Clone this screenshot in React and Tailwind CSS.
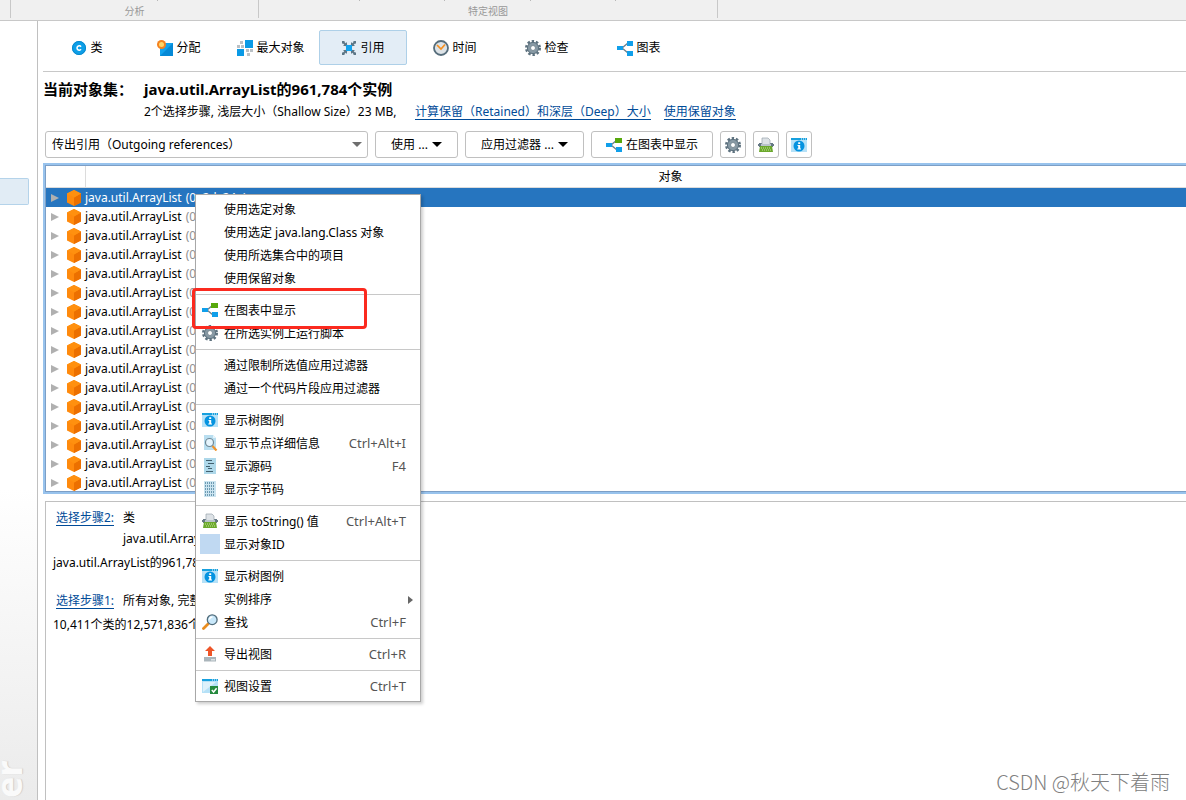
import clsx from 'clsx';

const tabs = [
  { label: '类', icon: 'class' },
  { label: '分配', icon: 'alloc' },
  { label: '最大对象', icon: 'biggest' },
  { label: '引用', icon: 'refs', active: true },
  { label: '时间', icon: 'clock' },
  { label: '检查', icon: 'gear' },
  { label: '图表', icon: 'graph' },
];

const menuGroups = [
  [
    { label: '使用选定对象' },
    { label: '使用选定 java.lang.Class 对象' },
    { label: '使用所选集合中的项目' },
    { label: '使用保留对象' },
  ],
  [
    { label: '在图表中显示', icon: 'showGraph' },
    { label: '在所选实例上运行脚本', icon: 'gear' },
  ],
  [{ label: '通过限制所选值应用过滤器' }, { label: '通过一个代码片段应用过滤器' }],
  [
    { label: '显示树图例', icon: 'info' },
    { label: '显示节点详细信息', icon: 'detail', keys: 'Ctrl+Alt+I' },
    { label: '显示源码', icon: 'source', keys: 'F4' },
    { label: '显示字节码', icon: 'bytecode' },
  ],
  [
    { label: '显示 toString() 值', icon: 'typewriter', keys: 'Ctrl+Alt+T' },
    { label: '显示对象ID', checked: true },
  ],
  [
    { label: '显示树图例', icon: 'info' },
    { label: '实例排序', submenu: true },
    { label: '查找', icon: 'search', keys: 'Ctrl+F' },
  ],
  [{ label: '导出视图', icon: 'export', keys: 'Ctrl+R' }],
  [{ label: '视图设置', icon: 'settings', keys: 'Ctrl+T' }],
];

const rows = ['(0x2dc24a)', ...Array(15).fill('(0x')];

const shapes = {
  class: (
    <>
      <circle cx="8" cy="8" r="7" fill="#0d9fe8" />
      <circle cx="8" cy="8" r="6.5" fill="none" stroke="#0787cc" />
      <path d="M10 6.7A2.2 2.2 0 1 0 10 9.3" fill="none" stroke="#fff" strokeWidth="1.5" />
    </>
  ),
  alloc: (
    <>
      <path d="M3 3h13v13H3z" fill="#12a3ee" />
      <path d="M3 16L16 3v13z" fill="#0589d6" />
      <circle cx="4.5" cy="4.5" r="4.5" fill="#f5821f" />
      <circle cx="4.5" cy="4.5" r="2.5" fill="#ffd76a" />
    </>
  ),
  biggest: (
    <>
      <path d="M8 0h8v8H8z M0 9h7v7H0z" fill="#0a9ae6" />
      <path d="M3 1h3v3H3z M0 5h3v3H0z M4 5h3v3H4z M9 9h3v3H9z M13 9h3v3h-3z M10 13h3v3h-3z" fill="#b9c0c5" />
    </>
  ),
  refs: (
    <>
      <path d="M2 2l4 4M14 2l-4 4M2 14l4-4M14 14l-4-4" stroke="#5d7686" strokeWidth="2" />
      <path d="M1 4V1h3z M12 1h3v3z M1 12v3h3z M12 15h3v-3z" fill="#5d7686" />
      <path d="M6 2v4H2z M10 2v4h4z M6 14v-4H2z M10 14v-4h4z" fill="#5d7686" />
      <path d="M5 5h6v6H5z" fill="#12a3ee" />
    </>
  ),
  clock: (
    <>
      <circle cx="8" cy="8" r="7" fill="#dde3e7" stroke="#566d7b" strokeWidth="1.8" />
      <path d="M4 5l4 4 4-4.500" fill="none" stroke="#f5901f" strokeWidth="1.7" />
    </>
  ),
  gear: (
    <>
      <circle cx="8" cy="8" r="6.5" fill="none" stroke="#5d717e" strokeWidth="3" strokeDasharray="2.3 1.784" />
      <circle cx="8" cy="8" r="4.200" fill="none" stroke="#8799a4" strokeWidth="3.400" />
      <circle cx="8" cy="8" r="5.600" fill="none" stroke="#5d717e" strokeWidth="1" />
      <circle cx="8" cy="8" r="2.500" fill="#fff" stroke="#5d717e" strokeWidth="0.8" />
    </>
  ),
  graph: (
    <>
      <path d="M5 8l6-5M5 8l6 5" fill="none" stroke="#6d8290" strokeWidth="1.5" />
      <path d="M0 6h6v4H0z M10 1h6v5h-6z M10 11h6v5h-6z" fill="#109fea" />
    </>
  ),
  showGraph: (
    <>
      <path d="M5 8l6-5M5 8l6 5" fill="none" stroke="#6d8290" strokeWidth="1.5" />
      <path d="M0 6h6v4H0z M10 10h6v5h-6z" fill="#109fea" />
      <path d="M9 1h7v5H9z" fill="#57a80c" />
    </>
  ),
  info: (
    <>
      <path d="M0 1h16v14H0z" fill="#b6e1f7" />
      <path d="M0 1h16v2H0z" fill="#17a0de" />
      <path d="M10 1.500h1v1h-1z M12 1.500h1v1h-1z M14 1.500h1v1h-1z" fill="#fff" />
      <circle cx="8" cy="9" r="5.500" fill="#0593e0" />
      <path d="M7.200 5.200h2v1.800h-2z M6.500 8h2.700v3.500h.8v1H6.300v-1h.9V9h-.7z" fill="#fff" />
    </>
  ),
  detail: (
    <>
      <path d="M2 0h9l3 3v12H2z" fill="#b9def0" />
      <path d="M11 0v3h3z" fill="#e6f4fa" />
      <path d="M10.5 11l4 4.5" stroke="#f0922a" strokeWidth="2.2" />
      <circle cx="7.5" cy="7.5" r="4" fill="#e6f5fd" stroke="#6e8795" strokeWidth="1.2" />
    </>
  ),
  source: (
    <>
      <path d="M2 0h12v16H2z" fill="#aed8ea" />
      <path d="M4 2.500h6M6 5.500h6M4 8.500h4M6 10.500h4M4 13.500h7" stroke="#42606f" />
    </>
  ),
  bytecode: (
    <>
      <path d="M2 0h12v16H2z" fill="#cbe4f0" />
      <path d="M3 2h10M3 5h10M3 8h10M3 11h10M3 14h10" stroke="#6d9ab2" strokeWidth="2" strokeDasharray="1 1" />
    </>
  ),
  typewriter: (
    <>
      <path d="M1 6h14v4H1z" fill="#667985" />
      <path d="M0 7h1v2H0z M15 7h1v2h-1z" fill="#667985" />
      <path d="M4 1h6l2 2v5H4z" fill="#dde2e6" stroke="#9aa4ac" strokeWidth="0.7" />
      <path d="M3 7h10v2H3z" fill="#b9c3ca" />
      <path d="M2 9h12l1 6H1z" fill="#6ba82c" />
      <path d="M3 11h10M4 13h9" stroke="#c4e39b" strokeDasharray="1 1" />
    </>
  ),
  search: (
    <>
      <path d="M1.500 14.500l4.500-4.500" stroke="#e98d20" strokeWidth="2.800" strokeLinecap="round" />
      <circle cx="10.200" cy="5.700" r="4.900" fill="#c9e8fa" stroke="#526d7c" strokeWidth="1.300" />
      <path d="M7.500 5.500a3 3 0 0 1 3-2.500" fill="none" stroke="#fff" strokeWidth="1.400" />
    </>
  ),
  export: (
    <>
      <path d="M8 0l5 5h-3v5H6V5H3z" fill="#ee5528" />
      <path d="M2 11h12v4.500H2z" fill="#aab5bb" />
      <path d="M9 13h4v1.500H9z" fill="#dce2e5" />
    </>
  ),
  settings: (
    <>
      <path d="M0 1h16v14H0z" fill="#b6e1f7" />
      <path d="M0 1h16v2H0z" fill="#17a0de" />
      <path d="M10 1.500h1v1h-1z M12 1.500h1v1h-1z M14 1.500h1v1h-1z" fill="#fff" />
      <path d="M1 14V4h13z" fill="#ddf1fb" />
      <path d="M8 8h8v8H8z" fill="#258a3e" />
      <path d="M9.800 12l1.800 2 3-3.800" fill="none" stroke="#fff" strokeWidth="1.500" />
    </>
  ),
  cube: (
    <>
      <path d="M8 0l7 3.500v9L8 16l-7-3.500v-9z" fill="#ff8a0d" />
      <path d="M15 3.500v9L8 16V7.500z" fill="#ec7000" />
      <path d="M8 0l7 3.500-7 4-7-4z" fill="#ff900f" />
    </>
  ),
};

const Icon = ({ name }) => (
  <svg viewBox="0 0 16 16" className="size-4 shrink-0" aria-hidden="true">
    {shapes[name]}
  </svg>
);

const Caret = ({ className }) => (
  <svg viewBox="0 0 10 5" className={clsx('h-[5px] w-[10px] shrink-0', className)} aria-hidden="true">
    <path d="M0 0h10L5 5z" fill="currentColor" />
  </svg>
);

const ToolButton = ({ className, children, ...props }) => (
  <button
    type="button"
    className={clsx('flex h-[27px] items-center justify-center rounded-[3px] border border-[#c0c0c0] bg-white', className)}
    {...props}
  >
    {children}
  </button>
);

// bottom ends of the separators between the ribbon buttons
const Ticks = ({ className }) => (
  <div className={clsx('absolute inset-x-0 top-0 flex', className)}>
    <i className="h-px w-px bg-[#b8b8b8]" />
    <i className="h-px w-px bg-[#b8b8b8]" />
    <i className="h-px w-px bg-[#b8b8b8]" />
    <i className="h-px w-px bg-[#b8b8b8]" />
  </div>
);

const Ribbon = () => (
  <header className="flex h-[21px] shrink-0 border-b border-[#c8c8c8] bg-[#f0f0f0] pl-[10px] text-[10px] leading-[20px] text-[#999]">
    <div className="relative h-[18px] w-[249px] border-x border-[#c8c8c8] pt-px text-center">
      分析
      <i className="absolute top-0 left-[146px] h-px w-px bg-[#b8b8b8]" />
    </div>
    <div className="relative h-[18px] w-[459px] border-r border-[#c8c8c8] pt-px text-center">
      特定视图
      <Ticks className="justify-between pr-[101px] pl-[100px]" />
    </div>
  </header>
);

const Sidebar = () => (
  <aside className="flex w-[38px] shrink-0 flex-col overflow-hidden border-r border-[#c0c0c0] bg-linear-to-b from-white from-60% to-[#ebebeb]">
    <div className="mt-[157px] h-[27px] w-[29px] rounded-r-[2px] border border-l-0 border-[#b4d3ea] bg-[#e1ecf5]" />
    <div className="mt-auto mb-[2px] h-[40px] w-[18px] rotate-180 text-[36px] leading-[18px] font-bold text-[#fafafa] [writing-mode:vertical-rl] text-shadow-[0px_1px_1px_#cccccc]">
      er
    </div>
  </aside>
);

const Tabs = () => (
  <nav className="flex h-[51px] items-center gap-1 border-b border-[#c8c8c8] pt-[2px]">
    {tabs.map((tab) => (
      <button
        key={tab.label}
        type="button"
        className={clsx(
          'flex h-[35px] w-[88px] shrink-0 items-center justify-center gap-[3px] rounded-[2px] border pt-px whitespace-nowrap',
          tab.active ? 'border-[#aed0e8] bg-[#e3edf6]' : 'border-transparent'
        )}
      >
        <Icon name={tab.icon} />
        {tab.label}
      </button>
    ))}
  </nav>
);

const CurrentSet = () => (
  <section className="flex pt-[7px]">
    <div className="w-[101px] shrink-0 text-[15px] leading-[20px] font-bold">当前对象集：</div>
    <div>
      <h1 className="text-[15px] leading-[20px] font-bold">java.util.ArrayList的961,784个实例</h1>
      <div className="flex pt-[3px] leading-[20px] whitespace-nowrap">
        <span className="w-[271px]">2个选择步骤, 浅层大小（Shallow Size）23 MB,</span>
        <a href="#retained" className="mr-[13px] h-[18px] border-b border-[#004b98] text-[#004b98]">
          计算保留（Retained）和深层（Deep）大小
        </a>
        <a href="#use" className="h-[18px] border-b border-[#004b98] text-[#004b98]">
          使用保留对象
        </a>
      </div>
    </div>
  </section>
);

const Toolbar = () => (
  <div className="flex gap-[7px] pt-[9px] pl-[2px]">
    <div className="relative w-[323px]">
      <select
        aria-label="引用类型"
        className="h-[27px] w-full appearance-none rounded-[3px] border border-[#c0c0c0] bg-white px-[6px]"
      >
        <option>传出引用（Outgoing references）</option>
      </select>
      <Caret className="pointer-events-none absolute top-[11px] right-[6px] text-[#6e6e6e]" />
    </div>
    <ToolButton className="w-[83px] gap-1">
      使用 ...
      <Caret />
    </ToolButton>
    <ToolButton className="w-[119px] gap-1">
      应用过滤器 ...
      <Caret />
    </ToolButton>
    <ToolButton className="w-[122px] gap-1">
      <Icon name="showGraph" />
      在图表中显示
    </ToolButton>
    <ToolButton className="w-[26px]" aria-label="脚本">
      <Icon name="gear" />
    </ToolButton>
    <ToolButton className="w-[26px]" aria-label="toString">
      <Icon name="typewriter" />
    </ToolButton>
    <ToolButton className="w-[26px]" aria-label="图例">
      <Icon name="info" />
    </ToolButton>
  </div>
);

const ObjectTable = () => (
  <div className="-mr-[72px] mt-[5px] h-[331px] overflow-hidden border-2 border-[#98c3ed]">
    <div className="h-full overflow-hidden border border-[#7d9fc6]">
      <table className="w-full table-fixed border-separate border-spacing-0">
        <thead>
          <tr className="h-[22px]">
            <th className="w-[40px] border-r border-b border-[#dcdcdc] p-0" />
            <th className="border-b border-[#dcdcdc] p-0 text-center leading-[20px] font-normal">对象</th>
          </tr>
        </thead>
        <tbody>
          {rows.map((address, i) => (
            <tr key={i} className={clsx('h-[19px]', i === 0 && 'bg-[#2675bf] text-white')}>
              <td colSpan={2} className="p-0">
                <div className="flex h-[19px] items-center pl-[5px] leading-[18px]">
                  <svg viewBox="0 0 8 10" className="mr-[7px] h-[10px] w-2 shrink-0" aria-hidden="true">
                    <path d="M0 1l8 4-8 4z" fill="#b0b0b0" />
                  </svg>
                  <Icon name="cube" />
                  <span className="pl-[3px]">java.util.ArrayList</span>
                  <span className={clsx('pl-1', i > 0 && 'text-[#909090]')}>{address}</span>
                </div>
              </td>
            </tr>
          ))}
        </tbody>
      </table>
    </div>
  </div>
);

const StepLink = ({ children }) => (
  <a href="#step" className="mr-[9px] h-[18px] border-b border-[#004b98] text-[#004b98]">
    {children}
  </a>
);

const Steps = () => (
  <section className="mt-[7px] ml-[2px] flex-1 border-t border-l border-[#c0c0c0] pt-[6px] pl-[7px] leading-[20px]">
    <div className="flex h-[21px] pl-[3px]">
      <StepLink>选择步骤2:</StepLink>
      类
    </div>
    <p className="h-[24px] pl-[70px]">java.util.ArrayList</p>
    <p className="h-[38px]">java.util.ArrayList的961,784个实例</p>
    <div className="flex h-[24px] pl-[3px]">
      <StepLink>选择步骤1:</StepLink>
      所有对象, 完整
    </div>
    <p>10,411个类的12,571,836个</p>
  </section>
);

const ContextMenu = () => (
  <ul
    role="menu"
    className="absolute top-[194px] left-[195px] w-[226px] border border-[#a8a8a8] bg-white py-[3px] shadow-[2px_2px_3px_rgba(0,0,0,0.2)]"
  >
    {menuGroups.map((group, g) => (
      <li key={g} className={clsx(g > 0 && 'mt-1 border-t border-[#c8c8c8] pt-1')}>
        {group.map((item) => (
          <button
            key={item.label}
            type="button"
            role="menuitem"
            className="flex h-[23px] w-full items-center pr-[14px] pl-[4px] whitespace-nowrap"
          >
            <span className={clsx('mt-px mr-1 flex size-5 items-center justify-center self-start', item.checked && 'bg-[#c0d9f2]')}>
              {item.icon && <Icon name={item.icon} />}
            </span>
            {item.label}
            {item.keys && <span className="ml-auto text-[13px] text-[#555]">{item.keys}</span>}
            {item.submenu && (
              <svg viewBox="0 0 5 8" className="-mr-[7px] ml-auto h-2 w-[5px]" aria-hidden="true">
                <path d="M0 0l5 4-5 4z" fill="#666" />
              </svg>
            )}
          </button>
        ))}
      </li>
    ))}
  </ul>
);

export default function App() {
  return (
    <div className="relative flex h-screen flex-col overflow-hidden bg-white font-['Noto_Sans','Noto_Sans_CJK_SC',sans-serif] text-[12px] text-black">
      <Ribbon />
      <div className="flex min-h-0 flex-1">
        <Sidebar />
        <main className="flex min-w-0 flex-1 flex-col pl-[5px]">
          <Tabs />
          <CurrentSet />
          <Toolbar />
          <ObjectTable />
          <Steps />
        </main>
      </div>
      <ContextMenu />
      {/* red marker around the graph entry */}
      <div className="pointer-events-none absolute top-[288px] left-[192px] h-[41px] w-[175px] rounded-[4px] border-3 border-[#fb2a1f]" />
      <div className="absolute right-4 bottom-[3px] font-['Noto_Sans_CJK_SC',sans-serif] text-[20px] leading-[30px] font-light text-[#808080]">
        CSDN @秋天下着雨
      </div>
    </div>
  );
}
